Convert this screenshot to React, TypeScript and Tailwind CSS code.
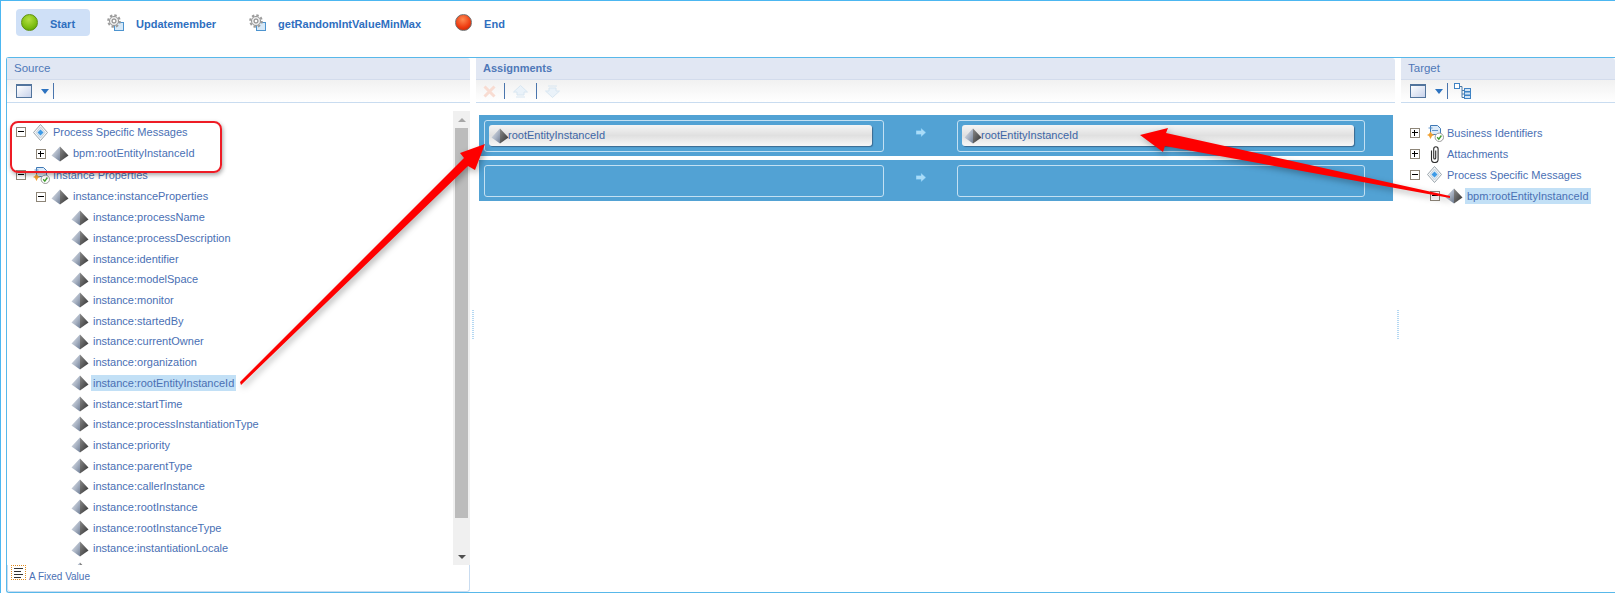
import React from "react";

const Pyramid = () => (
  <svg width="18" height="16" viewBox="0 0 18 16" className="shrink-0">
    <defs>
      <linearGradient id="pyrL" x1="0" y1="0" x2="1" y2="1">
        <stop offset="0" stopColor="#e2e6ec" />
        <stop offset="0.55" stopColor="#aab4c4" />
        <stop offset="1" stopColor="#6f7d94" />
      </linearGradient>
      <linearGradient id="pyrR" x1="0" y1="0" x2="1" y2="1">
        <stop offset="0" stopColor="#8a8a8a" />
        <stop offset="1" stopColor="#303030" />
      </linearGradient>
    </defs>
    <polygon points="9,0.5 0.5,9.5 9,15.5" fill="url(#pyrL)" />
    <polygon points="9,0.5 17.5,9.5 9,15.5" fill="url(#pyrR)" />
  </svg>
);

const Gear = () => (
  <svg width="17" height="17" viewBox="0 0 17 17" className="-mt-[4px] shrink-0">
    <rect x="7.5" y="8.5" width="9" height="8" fill="#d6e8f7" stroke="#4d94cf" />
    <circle cx="7" cy="7" r="5.8" fill="none" stroke="#9b9b9b" strokeWidth="2" strokeDasharray="2.4 2.1" />
    <circle cx="7" cy="7" r="4.6" fill="#e6e6e6" stroke="#9a9a9a" />
    <circle cx="7" cy="7" r="2" fill="#ffffff" stroke="#7d7d7d" />
  </svg>
);

const Messages = () => (
  <svg width="15" height="17" viewBox="0 0 15 17" className="shrink-0">
    <polygon points="7.5,0.5 14.5,8.5 7.5,16.5 0.5,8.5" fill="#f6f6f6" stroke="#9aa5ad" />
    <polygon points="7.5,3 12,8.5 7.5,14 3,8.5" fill="#dfeaf4" stroke="#c5d2dc" />
    <polygon points="7.5,5.5 10.5,8.5 7.5,11.5 4.5,8.5" fill="#3d9ae6" />
  </svg>
);

const Properties = () => (
  <svg width="17" height="17" viewBox="0 0 17 17" className="shrink-0">
    <path d="M3.5 0.5h7l3 3v6h-10z" fill="#dcebf9" stroke="#3f79b5" />
    <path d="M1.5 3h4M5 5.5h6" stroke="#5f95cc" />
    <polygon points="3.5,6.5 5,9 7.5,10 5,11 3.5,14 2,11 0,10 2,9" fill="#f0a030" />
    <circle cx="12.3" cy="12.3" r="4.2" fill="#ffffff" stroke="#9a9a9a" />
    <path d="M10.2 12.3l1.6 1.8 2.6-3.6" fill="none" stroke="#3f9c2f" strokeWidth="1.4" />
  </svg>
);

const Clip = () => (
  <svg width="10" height="17" viewBox="0 0 10 17" className="shrink-0">
    <path
      d="M1.5 4.5v8.7a3.3 3.3 0 0 0 6.6 0V3a2.2 2.2 0 0 0-4.4 0v9a1 1 0 0 0 2 0V4.5"
      fill="none"
      stroke="#2d2d2d"
      strokeWidth="1.1"
    />
  </svg>
);

const WindowIcon = () => (
  <span className="h-[14px] w-[16px] shrink-0 border border-t-2 border-[#52749c] bg-gradient-to-br from-white to-[#c8d2ea]" />
);

const Caret = () => (
  <svg width="8" height="5" viewBox="0 0 8 5" className="shrink-0">
    <polygon points="0,0 8,0 4,5" fill="#2d73c0" />
  </svg>
);

const Sep = () => <span className="h-[16px] w-px shrink-0 bg-[#4a75ad]" />;

const TreeIcon = () => (
  <svg width="17" height="16" viewBox="0 0 17 16" className="shrink-0">
    <rect x="0.5" y="0.5" width="5" height="5" fill="#ffffff" stroke="#3f83c4" />
    <path d="M5.5 3.5h2.5v11M8 7.5h2M8 11h2M8 14.5h2" fill="none" stroke="#4a7aa8" />
    <rect x="10.5" y="5.5" width="6" height="3" fill="#d3e5f5" stroke="#3f83c4" />
    <rect x="10.5" y="9" width="6" height="3" fill="#d3e5f5" stroke="#3f83c4" />
    <rect x="10.5" y="12.5" width="6" height="3" fill="#d3e5f5" stroke="#3f83c4" />
  </svg>
);

const Ball = ({ green }: { green?: boolean }) => (
  <span
    className={
      green
        ? "h-[17px] w-[17px] shrink-0 rounded-full border border-[#5f8f10] bg-[radial-gradient(circle_at_45%_30%,#b4e040,#7cbd10_60%,#4c9405)]"
        : "-mt-[4px] h-[17px] w-[17px] shrink-0 rounded-full border border-[#6f6f6f] bg-[radial-gradient(circle_at_45%_30%,#ff8a50,#ee3a10_60%,#b82000)]"
    }
  />
);

const Toggle = ({ open }: { open?: boolean }) => (
  <span className="relative h-[10px] w-[10px] shrink-0 border border-[#8d8578] bg-white">
    <span className="absolute left-[1px] top-[3px] h-px w-[6px] bg-black" />
    {!open && <span className="absolute left-[3px] top-[1px] h-[6px] w-px bg-black" />}
  </span>
);

type Row = {
  label: string;
  level: number;
  toggle?: "open" | "closed";
  icon?: "pyr" | "msg" | "prop" | "clip";
  selected?: boolean;
};

const sourceRows: Row[] = [
  { label: "Process Specific Messages", level: 0, toggle: "open", icon: "msg" },
  { label: "bpm:rootEntityInstanceId", level: 1, toggle: "closed" },
  { label: "Instance Properties", level: 0, toggle: "open", icon: "prop" },
  { label: "instance:instanceProperties", level: 1, toggle: "open" },
  { label: "instance:processName", level: 2 },
  { label: "instance:processDescription", level: 2 },
  { label: "instance:identifier", level: 2 },
  { label: "instance:modelSpace", level: 2 },
  { label: "instance:monitor", level: 2 },
  { label: "instance:startedBy", level: 2 },
  { label: "instance:currentOwner", level: 2 },
  { label: "instance:organization", level: 2 },
  { label: "instance:rootEntityInstanceId", level: 2, selected: true },
  { label: "instance:startTime", level: 2 },
  { label: "instance:processInstantiationType", level: 2 },
  { label: "instance:priority", level: 2 },
  { label: "instance:parentType", level: 2 },
  { label: "instance:callerInstance", level: 2 },
  { label: "instance:rootInstance", level: 2 },
  { label: "instance:rootInstanceType", level: 2 },
  { label: "instance:instantiationLocale", level: 2 },
  { label: "instance:parentInfo", level: 2, toggle: "closed" },
];

const targetRows: Row[] = [
  { label: "Business Identifiers", level: 0, toggle: "closed", icon: "prop" },
  { label: "Attachments", level: 0, toggle: "closed", icon: "clip" },
  { label: "Process Specific Messages", level: 0, toggle: "open", icon: "msg" },
  { label: "bpm:rootEntityInstanceId", level: 1, toggle: "open", selected: true },
];

function TreeRow({ row, base, height }: { row: Row; base: number; height: string }) {
  const icon = row.icon ?? "pyr";
  const toggleX = base + row.level * 20;
  return (
    <div className={"relative flex items-center text-[11px] text-[#4a70b4] " + height}>
      <span className="flex h-full items-center" style={{ marginLeft: toggleX }}>
        <span className="flex w-[17px] shrink-0">{row.toggle && <Toggle open={row.toggle === "open"} />}</span>
        <span className="flex w-[20px] shrink-0 items-center justify-start">
          {icon === "pyr" && (
            <span className="-ml-[2px] flex">
              <Pyramid />
            </span>
          )}
          {icon === "msg" && <Messages />}
          {icon === "prop" && <Properties />}
          {icon === "clip" && (
            <span className="ml-[3px] flex">
              <Clip />
            </span>
          )}
        </span>
        <span className={row.selected ? "-ml-[2px] whitespace-nowrap bg-[#c2e0f6] px-[2px]" : "whitespace-nowrap"}>
          {row.label}
        </span>
      </span>
    </div>
  );
}

function PanelHead({ title, bold, children }: { title: string; bold?: boolean; children: React.ReactNode }) {
  return (
    <>
      <div
        className={
          "flex h-[22px] items-center rounded-tr-[3px] border-b border-[#d3dcec] bg-[#e1e7f3] pl-[7px] text-[#4f78b8] " +
          (bold ? "text-[11px] font-bold" : "text-[11.5px]")
        }
      >
        {title}
      </div>
      <div className="flex h-[23px] items-center border-b border-[#c9dcf0] bg-gradient-to-b from-[#f1f1f1] to-white">
        {children}
      </div>
    </>
  );
}

const Splitter = () => (
  <div className="flex w-[6px] shrink-0 items-center justify-center">
    <span className="h-[30px] w-[2px] bg-[repeating-linear-gradient(to_bottom,#b5d8f2_0,#b5d8f2_1px,#ffffff_1px,#ffffff_2px)]" />
  </div>
);

const Chip = ({ width }: { width: string }) => (
  <div
    className={
      "flex h-[21px] items-center rounded-[3px] bg-gradient-to-b from-[#f5f5f5] via-[#e0e0e0] to-[#f7f7f7] pl-[2px] text-[11px] text-[#3d66a6] shadow-[1px_1px_1px_rgba(40,60,90,0.55)] " +
      width
    }
  >
    <span className="-mr-[1px] flex">
      <Pyramid />
    </span>
    <span>rootEntityInstanceId</span>
  </div>
);

const FlowArrow = () => (
  <svg width="10" height="9" viewBox="0 0 10 9" className="mt-[8px]">
    <polygon points="0,2.5 5,2.5 5,0 10,4.5 5,9 5,6.5 0,6.5" fill="#a9dcf8" stroke="#5eb0e6" strokeWidth="0.5" />
  </svg>
);

export default function App() {
  return (
    <div className="relative h-[593px] w-[1615px] overflow-hidden border-l border-t border-[#4cb7f1] bg-white font-['Liberation_Sans',Arial,sans-serif]">
      <div className="flex h-[56px] items-center pb-[9px] pl-[15px] text-[11px] font-bold text-[#2f6fbf]">
        <div className="-mt-[4px] flex h-[27px] w-[74px] items-center gap-[12px] rounded-[4px] bg-[#cfe0f7] pl-[5px]">
          <Ball green />
          <span className="mt-[3px]">Start</span>
        </div>
        <div className="ml-[17px] flex items-center gap-[12px]">
          <Gear />
          <span>Updatemember</span>
        </div>
        <div className="ml-[33px] flex items-center gap-[12px]">
          <Gear />
          <span>getRandomIntValueMinMax</span>
        </div>
        <div className="ml-[34px] flex items-center gap-[12px]">
          <Ball />
          <span>End</span>
        </div>
      </div>

      <div className="ml-[5px] flex h-[536px] rounded-l-[3px] border-b border-l border-t border-[#58b8ea]">
        <div className="flex w-[463px] shrink-0 flex-col">
          <PanelHead title="Source">
            <span className="ml-[9px] flex items-center gap-[9px]">
              <WindowIcon />
              <Caret />
            </span>
            <span className="ml-[4px] flex">
              <Sep />
            </span>
          </PanelHead>
          <div className="mt-[8px] flex h-[454px] shrink-0">
            <div className="flex-1 overflow-hidden pt-[10.25px]">
              {sourceRows.map((row) => (
                <TreeRow key={row.label} row={row} base={9} height={row.toggle ? "h-[21.5px]" : "h-[20.7px]"} />
              ))}
            </div>
            <div className="flex w-[17px] shrink-0 flex-col bg-[#f0f0f0]">
              <div className="flex h-[17px] items-center justify-center">
                <span className="h-0 w-0 border-x-[4px] border-b-[4px] border-x-transparent border-b-[#a6a6a6]" />
              </div>
              <div className="mx-[2px] h-[390px] bg-[#bcbcbc]" />
              <div className="flex-1" />
              <div className="flex h-[17px] items-center justify-center">
                <span className="h-0 w-0 border-x-[4px] border-t-[4px] border-x-transparent border-t-[#505050]" />
              </div>
            </div>
          </div>
          <div className="flex flex-1 items-start gap-[3px] rounded-b-[3px] border border-t-0 border-[#c9dcf0] pl-[3px] text-[10px] text-[#4a70b4]">
            <span className="flex h-[15px] w-[15px] shrink-0 flex-col justify-center gap-[2px] border border-dotted border-[#e08a20] px-[2px]">
              <span className="h-px w-full bg-[#333333]" />
              <span className="h-px w-[7px] bg-[#333333]" />
              <span className="h-px w-full bg-[#333333]" />
              <span className="h-px w-[7px] bg-[#333333]" />
            </span>
            <span className="mt-[4px]">A Fixed Value</span>
          </div>
        </div>

        <Splitter />

        <div className="flex w-[919px] shrink-0 flex-col">
          <PanelHead title="Assignments" bold>
            <span className="ml-[7px] flex items-center gap-[8px]">
              <svg width="13" height="13" viewBox="0 0 13 13" className="shrink-0">
                <path d="M1.5 1.5l10 10M11.5 1.5l-10 10" stroke="#f8dcd2" strokeWidth="3" />
              </svg>
              <Sep />
              <svg width="15" height="13" viewBox="0 0 15 13" className="shrink-0">
                <polygon points="7.5,0.5 14.5,7 11,7 11,10 4,10 4,7 0.5,7" fill="#eaf2f9" stroke="#d8e6f1" />
                <path d="M3 12h9" stroke="#d8e6f1" />
              </svg>
              <Sep />
              <svg width="15" height="13" viewBox="0 0 15 13" className="shrink-0">
                <polygon points="7.5,12.5 14.5,6 11,6 11,3 4,3 4,6 0.5,6" fill="#eaf2f9" stroke="#d8e6f1" />
                <path d="M3 1h9" stroke="#d8e6f1" />
              </svg>
            </span>
          </PanelHead>
          <div className="flex flex-col gap-[4px] pl-[3px] pt-[12px]">
            {[true, false].map((filled) => (
              <div key={String(filled)} className="flex h-[41px] w-[914px] items-start bg-[#52a2d4] p-[5px]">
                <div className="h-[32px] w-[400px] rounded-[3px] border border-[#c3e0f2] p-[4px]">
                  {filled && <Chip width="w-[383px]" />}
                </div>
                <div className="flex w-[73px] justify-center">
                  <FlowArrow />
                </div>
                <div className="h-[32px] w-[408px] rounded-[3px] border border-[#c3e0f2] p-[4px]">
                  {filled && <Chip width="w-[392px]" />}
                </div>
              </div>
            ))}
          </div>
        </div>

        <Splitter />

        <div className="flex flex-1 flex-col">
          <PanelHead title="Target">
            <span className="ml-[9px] flex items-center gap-[9px]">
              <WindowIcon />
              <Caret />
            </span>
            <span className="ml-[4px] flex items-center gap-[6px]">
              <Sep />
              <TreeIcon />
            </span>
          </PanelHead>
          <div className="pt-[20px]">
            {targetRows.map((row) => (
              <TreeRow key={row.label} row={row} base={9} height="h-[20.8px]" />
            ))}
          </div>
        </div>
      </div>

      <div className="absolute left-[9px] top-[120px] h-[52px] w-[212px] rounded-[8px] border-2 border-[#ee1c25] shadow-[1px_2px_4px_rgba(0,0,0,0.35)]" />

      <svg className="absolute left-[-1px] top-[-1px] drop-shadow-[2px_3px_3px_rgba(0,0,0,0.3)]" width="1615" height="593" viewBox="0 0 1615 593">
        <polygon points="240,382 241,385 468,166 475,170 485,144 460,153 464,158" fill="#fe0000" />
        <polygon points="1450,196 1450,198 1165,146 1163,152 1140,135 1168,128 1166,133" fill="#fe0000" />
      </svg>
    </div>
  );
}
